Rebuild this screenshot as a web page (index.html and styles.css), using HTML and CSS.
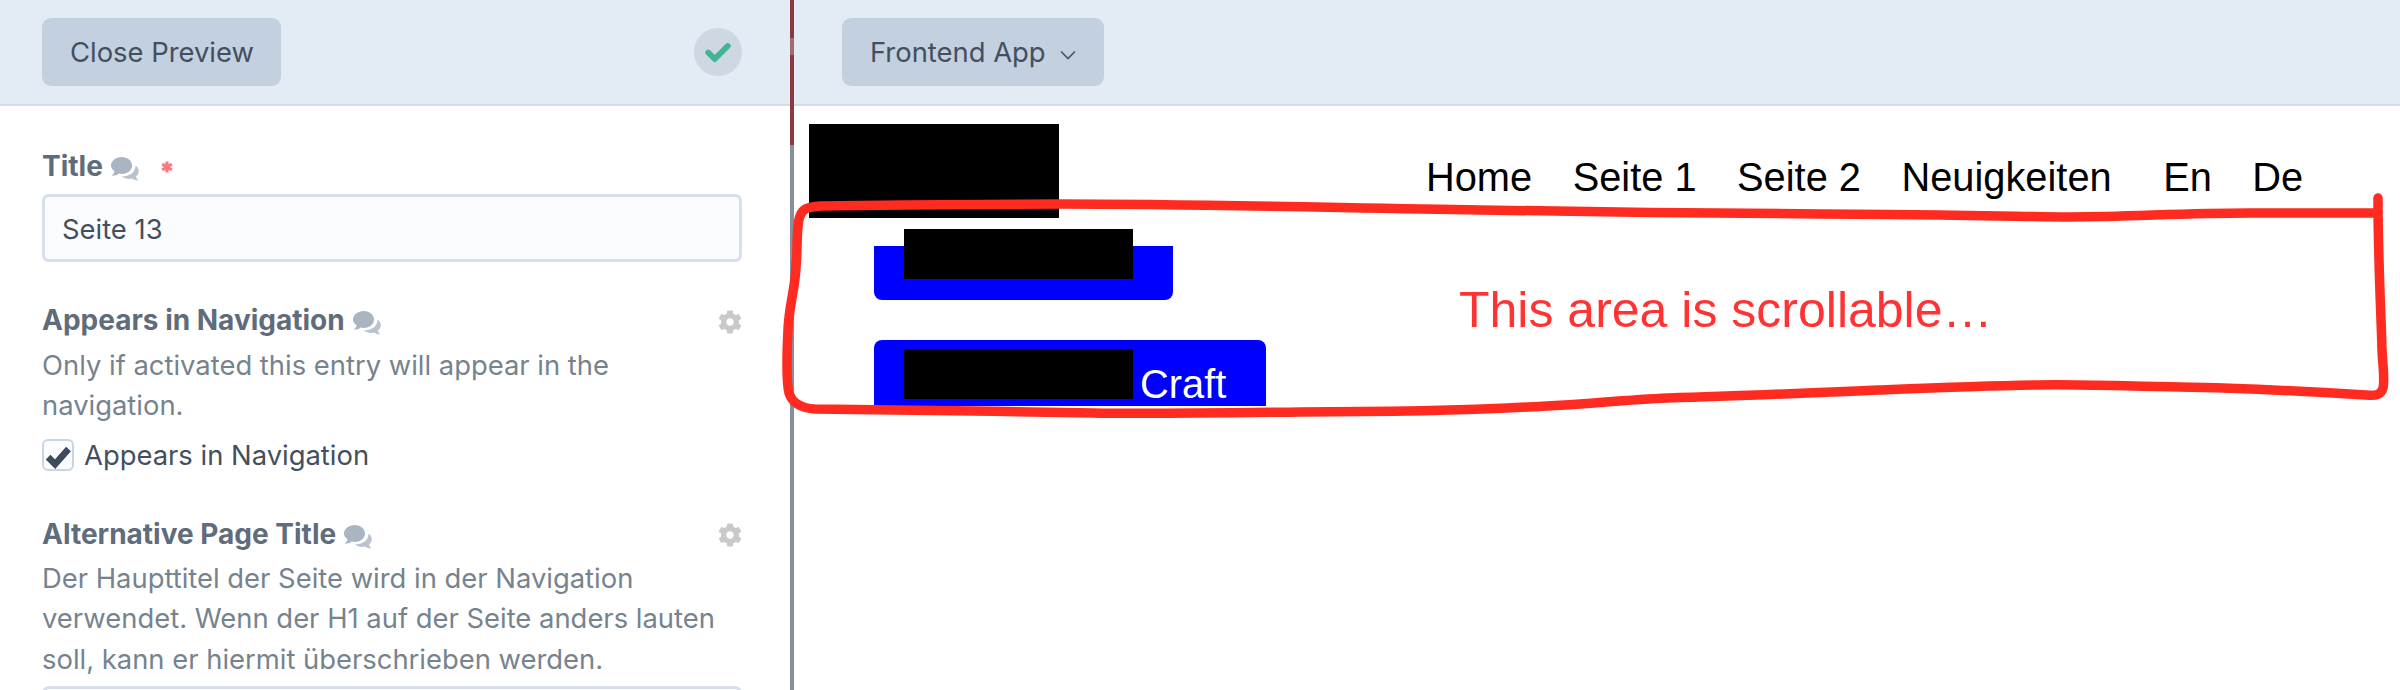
FILE: index.html
```
<!DOCTYPE html>
<html lang="en">
<head>
<meta charset="utf-8">
<title>Preview</title>
<link rel="stylesheet" href="styles.css">
</head>
<body>
<svg width="0" height="0" class="defs">
  <defs>
    <symbol id="comments" viewBox="0 0 28 24">
      <path d="M24.600 8.400c2 1.400 3.200 3.400 3.200 5.700 0 2.200-1 4.100-2.800 5.500.2 1.300 1 2.500 2 3.400.200.200.100.500-.200.500-2.200 0-4.200-.7-5.800-1.900-1 .2-1.900.3-2.700.3-3 0-5.600-1-7.300-2.700 6.500.2 13.600-3.300 13.600-10.800z" fill="#b9c2cd"/>
      <path d="M10.800 0C16.600 0 21 3.700 21 8.500S16.600 17 10.800 17c-1 0-2-.1-3-.4C6.200 18 4 18.800 1.500 18.800c-.3 0-.5-.4-.2-.6 1.100-1 1.900-2.300 2.200-3.900C1.400 12.800 0 10.800 0 8.500 0 3.700 5 0 10.800 0z" fill="#aab5c2"/>
    </symbol>
    <symbol id="cog" viewBox="0 0 512 512">
      <path fill="#c9c9c9" d="M487.400 315.700l-42.600-24.600c4.300-23.200 4.300-47 0-70.200l42.600-24.600c4.900-2.800 7.100-8.600 5.500-14-11.100-35.600-30-67.800-54.700-94.600-3.800-4.100-10-5.100-14.800-2.300L380.800 110c-17.900-15.400-38.500-27.300-60.800-35.100V25.800c0-5.600-3.900-10.500-9.400-11.700-36.700-8.200-74.300-7.800-109.200 0-5.500 1.200-9.400 6.100-9.400 11.700V75c-22.200 7.900-42.800 19.800-60.800 35.100L88.700 85.500c-4.900-2.800-11-1.900-14.800 2.300-24.700 26.700-43.600 58.900-54.700 94.600-1.700 5.400.6 11.200 5.500 14L67.300 221c-4.300 23.200-4.300 47 0 70.200l-42.600 24.600c-4.900 2.800-7.100 8.600-5.500 14 11.100 35.600 30 67.800 54.700 94.600 3.800 4.100 10 5.100 14.800 2.300l42.600-24.600c17.900 15.400 38.500 27.300 60.800 35.100v49.200c0 5.600 3.900 10.500 9.400 11.700 36.700 8.200 74.300 7.800 109.200 0 5.500-1.200 9.400-6.100 9.400-11.700v-49.200c22.200-7.900 42.800-19.800 60.800-35.100l42.600 24.600c4.900 2.800 11 1.900 14.800-2.300 24.700-26.700 43.600-58.900 54.700-94.600 1.500-5.500-.7-11.300-5.600-14.100zM256 336c-44.100 0-80-35.900-80-80s35.900-80 80-80 80 35.900 80 80-35.900 80-80 80z"/>
    </symbol>
  </defs>
</svg>
<main class="layout">
  <section class="pane pane-left">
    <header class="bar bar-left">
      <button class="btn btn-close">Close Preview</button>
      <span class="status">
        <svg class="status-check" viewBox="0 0 24 24"><path d="M3 12.500l6 6L21 6.500" fill="none" stroke="#41b593" stroke-width="5.400" stroke-linecap="round" stroke-linejoin="round"/></svg>
      </span>
    </header>
    <form class="form">
      <div class="field field-title">
        <div class="label-row">
          <label class="label">Title</label>
          <svg class="cmt"><use href="#comments"/></svg>
          <svg class="req" viewBox="0 0 12 12"><path d="M6 .5v11M1.200 3.200l9.600 5.600M10.800 3.200l-9.600 5.600" fill="none" stroke="#fb7a80" stroke-width="3.200"/></svg>
        </div>
        <div class="input input-title">Seite 13</div>
      </div>
      <div class="field field-nav">
        <div class="label-row">
          <label class="label">Appears in Navigation</label>
          <svg class="cmt"><use href="#comments"/></svg>
          <svg class="gear"><use href="#cog"/></svg>
        </div>
        <p class="desc">Only if activated this entry will appear in the navigation.</p>
        <div class="check-row">
          <span class="checkbox">
            <svg class="tick" viewBox="0 0 24 24"><path d="M3.500 13l6 6L21 6" fill="none" stroke="#3f4b5a" stroke-width="5.600"/></svg>
          </span>
          <span class="check-label">Appears in Navigation</span>
        </div>
      </div>
      <div class="field field-alt">
        <div class="label-row">
          <label class="label">Alternative Page Title</label>
          <svg class="cmt"><use href="#comments"/></svg>
          <svg class="gear"><use href="#cog"/></svg>
        </div>
        <p class="desc desc-alt">Der Haupttitel der Seite wird in der Navigation verwendet. Wenn der H1 auf der Seite anders lauten soll, kann er hiermit überschrieben werden.</p>
        <div class="input input-alt"></div>
      </div>
    </form>
  </section>
  <div class="divider"><span class="divider-ghost"></span></div>
  <section class="pane pane-right">
    <header class="bar bar-right">
      <button class="btn">Frontend App
        <svg class="chevron" viewBox="0 0 16 10"><path d="M1 1.500l7 7 7-7" fill="none" stroke="#4a5665" stroke-width="1.700"/></svg>
      </button>
    </header>
    <div class="site">
      <div class="site-head">
        <div class="logo"></div>
        <nav class="nav">
          <a>Home</a><a>Seite 1</a><a>Seite 2</a><a class="news">Neuigkeiten</a><a>En</a><a>De</a>
        </nav>
      </div>
      <div class="scroll">
        <div class="cta cta-one"><span class="redact"></span></div>
        <div class="cta cta-two"><span class="redact-inline"></span><span class="cta-text">Craft</span></div>
      </div>
    </div>
  </section>
</main>
<svg class="scribble" viewBox="0 0 2400 690">
  <path d="M796 267C798 245 796 226 800 216C803 208 808 207 820 206C900 205 1000 204 1059 204C1200 204 1340 208 1480 210C1600 212 1700 213 1820 214C1900 214 2000 216 2070 217C2130 217 2180 213 2250 213C2300 213 2340 213 2378 213M2378 198C2378 260 2381 310 2382 350C2383 370 2385 380 2383 388C2381 395 2376 396 2366 395C2300 391 2250 388 2180 387C2120 386 2070 384 2038 385C1980 386 1930 388 1878 390C1810 393 1740 396 1668 398C1620 400 1580 405 1528 407C1470 410 1400 412 1300 412C1220 413 1150 414 1092 413C1000 411 900 410 815 409C800 408 792 403 789 393C786 380 787 350 788 330C789 305 795 290 796 267" fill="none" stroke="#ff2a20" stroke-width="9.500" stroke-linecap="round" stroke-linejoin="round"/>
</svg>
<div class="note">This area is scrollable…</div>
</body>
</html>
```
FILE: styles.css
```
* { box-sizing: border-box; }
html, body { margin: 0; padding: 0; background: #fff; }
body { width: 2400px; height: 690px; overflow: hidden; position: relative; font-family: Inter, "Liberation Sans", sans-serif; }
.defs { position: absolute; }
.layout { display: flex; height: 690px; }
.pane { display: flex; flex-direction: column; height: 690px; overflow: hidden; }
.pane-left { width: 790px; flex: none; }
.pane-right { flex: 1; min-width: 0; }
.divider { width: 4px; flex: none; height: 690px; position: relative; background: linear-gradient(#8b3a41 0 145px, #87909a 145px); }
.divider-ghost { position: absolute; left: 0; top: 38px; width: 4px; height: 17px; background: #a06a70; }
.bar { height: 106px; flex: none; background: #e3ebf5; border-bottom: 2px solid #d3dde8; display: flex; align-items: flex-start; padding-top: 18px; }
.bar-left { padding-left: 42px; padding-right: 48px; justify-content: space-between; }
.bar-right { padding-left: 48px; }
.btn { height: 68px; border: 0; border-radius: 9px; background: #c3d0e0; color: #434f5e; font-family: inherit; font-size: 27.4px; padding: 0 28px; display: flex; align-items: center; white-space: nowrap; }
.btn-close { padding-right: 27px; }
.chevron { width: 16px; height: 10px; margin-left: 14px; margin-top: 5px; }
.status { width: 48px; height: 48px; margin-top: 10px; border-radius: 50%; background: #cdd8e3; display: flex; align-items: center; justify-content: center; }
.status-check { width: 26px; height: 26px; }
.form { padding: 0 48px 0 42px; flex: 1; overflow: hidden; }
.field-title { padding-top: 42px; }
.field-nav { padding-top: 40px; }
.field-alt { padding-top: 41px; }
.label-row { display: flex; align-items: center; height: 36px; }
.label { font-size: 28px; font-weight: 700; color: #5f6c7b; line-height: 36px; }
.cmt { width: 28px; height: 24px; margin-left: 8px; margin-top: 6px; flex: none; }
.req { width: 12px; height: 12px; margin-left: 22px; margin-top: 2px; flex: none; }
.gear { width: 24px; height: 24px; margin-left: auto; margin-top: 3px; flex: none; }
.input { height: 68px; margin-top: 10px; border: 3px solid #d5deea; border-radius: 7px; background: #fbfcfe; font-size: 27.4px; color: #434f5e; padding: 0 17px; display: flex; align-items: center; }
.input-title { padding-top: 2px; }
.input-alt { margin-top: 7px; }
.desc { margin: 7px 0 0; font-size: 27.4px; line-height: 40.4px; color: #76838f; }
.desc-alt { margin-top: 6px; }
.check-row { display: flex; align-items: center; margin-top: 9px; height: 40px; }
.checkbox { width: 32px; height: 32px; border: 2px solid #c8d5e5; border-radius: 6px; background: #fbfcfe; display: flex; align-items: center; justify-content: center; flex: none; }
.tick { width: 28px; height: 28px; margin-top: 2px; }
.check-label { font-size: 27.4px; color: #434f5e; margin-left: 10px; }
.site { flex: 1; font-family: "Liberation Sans", Arial, sans-serif; padding: 18px 0 0 15px; }
.site-head { display: flex; align-items: flex-start; height: 94px; }
.logo { width: 250px; height: 94px; background: #000; flex: none; }
.nav { display: flex; gap: 40.5px; margin-left: 367px; padding-top: 30px; font-size: 39.8px; line-height: 46px; color: #000; white-space: nowrap; }
.nav .news { margin-right: 11px; }
.scroll { height: 188px; padding: 28px 0 0 65px; overflow: hidden; }
.cta { background: #00f; color: #fff; position: relative; }
.cta-one { width: 299px; height: 54px; border-radius: 0 0 8px 8px; }
.cta-two { width: 392px; height: 66px; margin-top: 40px; border-radius: 8px 8px 0 0; padding: 9px 0 0 30px; display: flex; align-items: flex-end; }
.redact { position: absolute; left: 30px; top: -17px; width: 229px; height: 50px; background: #000; }
.redact-inline { width: 229px; height: 50px; background: #000; flex: none; align-self: flex-start; }
.cta-text { font-size: 39.8px; line-height: 44px; margin-left: 7px; }
.scribble { position: absolute; left: 0; top: 0; width: 2400px; height: 690px; pointer-events: none; }
.note { position: absolute; left: 1459px; top: 281px; font-family: "Liberation Sans", Arial, sans-serif; font-size: 50px; line-height: 58px; color: #ff3333; white-space: nowrap; }
```
